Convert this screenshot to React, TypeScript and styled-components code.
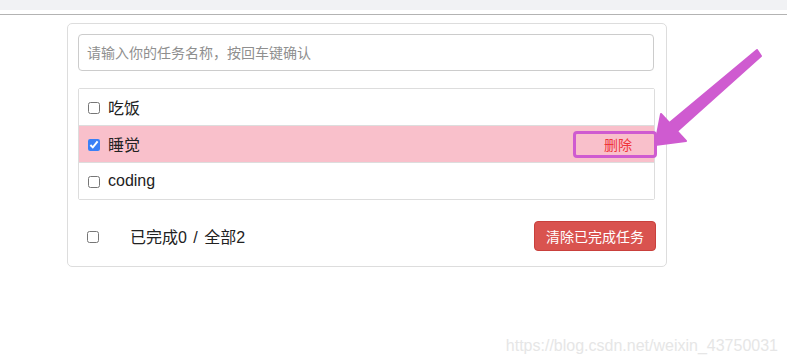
import React, { useState } from 'react';
import styled, { createGlobalStyle } from 'styled-components';

const GlobalStyle = createGlobalStyle`
  html, body {
    margin: 0;
    padding: 0;
    background: #fff;
    font-family: "Liberation Sans", "Noto Sans CJK SC", sans-serif;
    color: #222;
  }
  * { box-sizing: border-box; }
`;

const Page = styled.div`
  position: relative;
  width: 787px;
  height: 364px;
  overflow: hidden;
`;

const BrowserBar = styled.div`
  height: 10px;
  background: #f1f2f4;
`;

const Divider = styled.div`
  margin-top: 4px;
  height: 1px;
  background: #b3b3b3;
`;

const TodoWrap = styled.div`
  width: 600px;
  margin: 8px 0 0 67px;
  padding: 10px;
  border: 1px solid #ddd;
  border-radius: 5px;
`;

const TaskInput = styled.input`
  display: block;
  width: 576px;
  height: 37px;
  padding: 0 8px;
  border: 1px solid #ccc;
  border-radius: 4px;
  font-size: 14px;
  font-family: "Liberation Sans", "Noto Sans CJK SC", sans-serif;
  outline: none;
  &::placeholder {
    color: #8f8f8f;
  }
`;

const List = styled.ul`
  list-style: none;
  margin: 17px 0 0;
  padding: 0;
  width: 577px;
  border: 1px solid #ddd;
  border-radius: 2px;
`;

const Item = styled.li<{ $hover: boolean }>`
  display: flex;
  align-items: center;
  height: 37px;
  padding: 0 0 0 9px;
  border-bottom: 1px solid #ddd;
  background: ${p => (p.$hover ? '#f9c0cb' : '#fff')};
  &:last-child {
    border-bottom: none;
    height: 36px;
  }
`;

const Check = styled.input`
  width: 12px;
  height: 12px;
  margin: 2px 8px 0 0;
  accent-color: #3a80f6;
`;

const Label = styled.span`
  flex: 1;
  font-size: 16px;
  font-family: "Liberation Sans", "Noto Sans CJK SC", sans-serif;
`;

const DeleteBtn = styled.button`
  width: 84px;
  height: 27px;
  margin-right: -3px;
  padding: 0 0 0 6px;
  background: transparent;
  color: #f0343c;
  font-size: 14px;
  font-family: "Noto Sans CJK SC", sans-serif;
  border: 3px solid #cf5bd0;
  border-radius: 4px;
`;

const Footer = styled.div`
  display: flex;
  align-items: center;
  height: 56px;
  padding: 16px 0 0 9px;
`;

const Summary = styled.span`
  flex: 1;
  margin-left: 23px;
  font-size: 16px;
  word-spacing: 2px;
`;

const ClearBtn = styled.button`
  height: 30px;
  padding: 0 11px;
  background: #d9534f;
  color: #fff;
  border: 1px solid #c9403c;
  border-radius: 4px;
  font-size: 14px;
  font-family: "Noto Sans CJK SC", sans-serif;
`;

const Arrow = styled.svg`
  position: absolute;
  left: 0;
  top: 0;
  pointer-events: none;
`;

const Watermark = styled.div`
  position: absolute;
  right: 9px;
  bottom: 9px;
  color: #e6e6e6;
  font-size: 16px;
  font-family: "Liberation Sans", sans-serif;
`;

export default function App() {
  const [todos] = useState([
    { id: 1, name: '吃饭', done: false },
    { id: 2, name: '睡觉', done: true },
    { id: 3, name: 'coding', done: false },
  ]);

  return (
    <Page>
      <GlobalStyle />
      <BrowserBar />
      <Divider />
      <TodoWrap>
        <TaskInput placeholder="请输入你的任务名称，按回车键确认" />
        <List>
          {todos.map(t => (
            <Item key={t.id} $hover={t.id === 2}>
              <Check type="checkbox" defaultChecked={t.done} />
              <Label>{t.name}</Label>
              {t.id === 2 && <DeleteBtn>删除</DeleteBtn>}
            </Item>
          ))}
        </List>
        <Footer>
          <Check type="checkbox" />
          <Summary>已完成0 / 全部2</Summary>
          <ClearBtn>清除已完成任务</ClearBtn>
        </Footer>
      </TodoWrap>
      <Arrow width="787" height="364" viewBox="0 0 787 364">
        <polygon
          points="757,50 761,56 675,133 667,125"
          fill="#cf5bd0"
          stroke="#cf5bd0"
          strokeWidth="2"
          strokeLinejoin="round"
        />
        <polygon points="655,145 661,114 686,141" fill="#cf5bd0" stroke="#cf5bd0" strokeWidth="2" strokeLinejoin="round" />
      </Arrow>
      <Watermark>https://blog.csdn.net/weixin_43750031</Watermark>
    </Page>
  );
}
